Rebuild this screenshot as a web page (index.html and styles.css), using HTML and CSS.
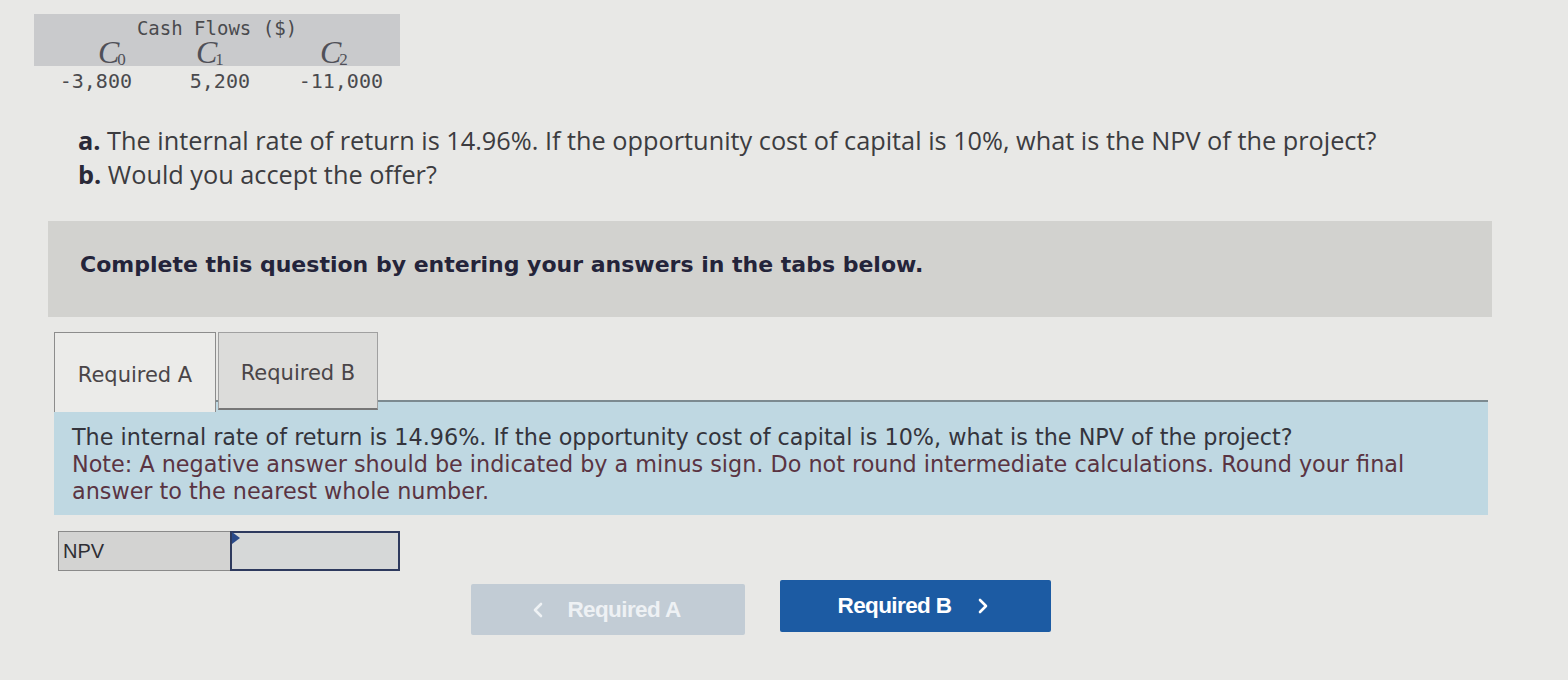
FILE: index.html
```html
<!DOCTYPE html>
<html>
<head>
<meta charset="utf-8">
<link rel="stylesheet" href="styles.css">
</head>
<body>
<div class="page">
  <div class="cf">
    <div class="cf-head">
      <div class="cf-title">Cash Flows ($)</div>
      <div class="cf-row">
        <div class="c c0">C<sub>0</sub></div>
        <div class="c c1">C<sub>1</sub></div>
        <div class="c c2">C<sub>2</sub></div>
      </div>
    </div>
    <div class="cf-row vals">
      <div class="v v0">-3,800</div>
      <div class="v v1">5,200</div>
      <div class="v v2">-11,000</div>
    </div>
  </div>

  <div class="question">
    <p><b>a.</b> The internal rate of return is 14.96%. If the opportunity cost of capital is 10%, what is the NPV of the project?</p>
    <p><b>b.</b> Would you accept the offer?</p>
  </div>

  <div class="instr">Complete this question by entering your answers in the tabs below.</div>

  <div class="tabarea">
    <div class="tabs">
      <div class="tab active">Required A</div>
      <div class="tab">Required B</div>
      <div class="tab-rest"></div>
    </div>
    <div class="panel">
      <p class="pq">The internal rate of return is 14.96%. If the opportunity cost of capital is 10%, what is the NPV of the project?</p>
      <p class="note">Note: A negative answer should be indicated by a minus sign. Do not round intermediate calculations. Round your final answer to the nearest whole number.</p>
    </div>
    <div class="npv">
      <div class="npv-label">NPV</div>
      <div class="npv-input"><span class="flag"></span></div>
    </div>
  </div>

  <div class="nav">
    <div class="btn prev"><svg class="chev-l" width="10" height="16" viewBox="0 0 10 16"><path d="M8 2 L2 8 L8 14" fill="none" stroke="currentColor" stroke-width="2.6" stroke-linecap="round" stroke-linejoin="round"/></svg>Required A</div>
    <div class="btn next">Required B<svg class="chev-r" width="10" height="16" viewBox="0 0 10 16"><path d="M2 2 L8 8 L2 14" fill="none" stroke="currentColor" stroke-width="2.6" stroke-linecap="round" stroke-linejoin="round"/></svg></div>
  </div>
</div>
</body>
</html>
```

FILE: styles.css
```css
html, body {
  margin: 0;
  padding: 0;
  background: #e8e8e6;
}
.page {
  width: 1568px;
  height: 680px;
  overflow: hidden;
  padding-top: 14px;
  box-sizing: border-box;
}
.cf {
  margin-left: 34px;
  width: 366px;
  font-family: "DejaVu Sans Mono", monospace;
  color: #4a4a4e;
}
.cf-head {
  background: #c9cacc;
  height: 52px;
}
.cf-title {
  text-align: center;
  font-size: 19px;
  line-height: 22px;
  padding-top: 3px;
  height: 22px;
}
.cf-row {
  display: grid;
  grid-template-columns: 122px 122px 122px;
}
.c {
  font-family: "Liberation Serif", serif;
  font-style: italic;
  font-size: 32px;
  line-height: 26px;
  color: #505058;
  letter-spacing: -2px;
}
.c sub {
  font-size: 17px;
  vertical-align: -2px;
  font-style: normal;
}
.c0 { padding-left: 64px; }
.c1 { padding-left: 40px; }
.c2 { padding-left: 42px; }
.vals {
  padding-top: 3px;
  font-size: 20px;
  line-height: 24px;
}
.v { text-align: right; }
.v0 { padding-right: 24px; }
.v1 { padding-right: 28px; }
.v2 { padding-right: 17px; }

.question {
  margin: 30px 0 0 78px;
  font-family: "Open Sans", Lato, sans-serif;
  font-size: 25.3px;
  line-height: 34px;
  color: #3c3c40;
}
.question p { margin: 0; }
.question b { color: #2a2a38; font-weight: 700; }

.instr {
  margin: 30px 0 0 48px;
  width: 1444px;
  height: 96px;
  box-sizing: border-box;
  background: #d2d2cf;
  padding: 30px 0 0 32px;
  font-family: "DejaVu Sans", sans-serif;
  font-weight: bold;
  font-size: 22px;
  line-height: 28px;
  color: #24243a;
}

.tabarea {
  margin: 15px 0 0 54px;
  width: 1434px;
}
.tabs {
  display: flex;
  align-items: flex-end;
  height: 68px;
}
.tab {
  box-sizing: border-box;
  font-family: "DejaVu Sans", sans-serif;
  font-size: 21px;
  color: #4a4548;
  display: flex;
  align-items: center;
  justify-content: center;
}
.tab.active {
  width: 162px;
  border: 1px solid #8c8c8c;
  border-bottom: none;
  background: #ebebe9;
  margin-bottom: -12px;
  height: 80px;
  padding-top: 4px;
  position: relative;
  z-index: 1;
}
.tab:not(.active) {
  width: 160px;
  height: 78px;
  margin-left: 2px;
  margin-bottom: -10px;
  background: #dcdcda;
  border: 1px solid #a0a0a0;
  border-bottom: 2px solid #777;
  padding-top: 4px;
}
.tab-rest { flex: 1; }
.panel {
  background: #bfd8e2;
  border-top: 2px solid #7c8a90;
  padding: 22px 60px 10px 18px;
  box-sizing: border-box;
  font-family: "DejaVu Sans", sans-serif;
  font-size: 22.3px;
  line-height: 27px;
}
.panel p { margin: 0; }
.pq { color: #34343c; }
.note { color: #5a3442; }

.npv {
  display: flex;
  margin: 16px 0 0 4px;
  height: 40px;
}
.npv-label {
  width: 172px;
  box-sizing: border-box;
  background: #d3d3d2;
  border: 1px solid #8a8a8a;
  border-right: none;
  font-family: "Liberation Sans", Arial, sans-serif;
  font-size: 20px;
  color: #2e2e34;
  padding: 8px 0 0 4px;
}
.npv-input {
  width: 170px;
  box-sizing: border-box;
  background: #d6d8d8;
  border: 2px solid #2e3a5e;
  position: relative;
}
.flag {
  position: absolute;
  left: 0;
  top: -1px;
  width: 0;
  height: 0;
  border-top: 6px solid transparent;
  border-bottom: 6px solid transparent;
  border-left: 8px solid #2a4a8a;
}

.nav {
  display: flex;
  align-items: flex-start;
  gap: 35px;
  margin: 9px 0 0 471px;
}
.btn {
  box-sizing: border-box;
  display: flex;
  align-items: center;
  justify-content: center;
  font-family: "Liberation Sans", Arial, sans-serif;
  font-weight: bold;
  font-size: 22.5px;
  letter-spacing: -0.6px;
  border-radius: 2px;
}
.btn.prev {
  width: 274px;
  height: 51px;
  margin-top: 4px;
  background: #c2ccd5;
  color: #eef1f4;
  padding-right: 2px;
}
.chev-l { margin-right: 24px; }
.btn.next {
  width: 271px;
  height: 52px;
  background: #1c5ba3;
  color: #ffffff;
  padding-right: 6px;
}
.chev-r { margin-left: 26px; }
```
